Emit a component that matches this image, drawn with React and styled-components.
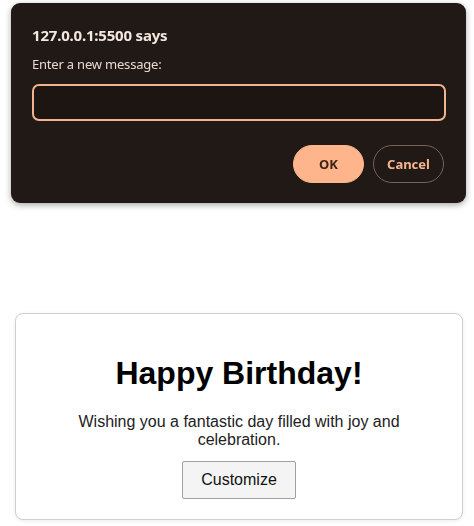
import React, { useState } from "react";
import styled, { createGlobalStyle } from "styled-components";

const GlobalStyle = createGlobalStyle`
  html, body {
    margin: 0;
    padding: 0;
    background: #ffffff;
  }
  body {
    font-family: "Liberation Sans", Arial, sans-serif;
  }
`;

const Page = styled.div`
  padding: 313px 11px 6px 15px;
`;

const Card = styled.div`
  box-sizing: border-box;
  width: 448px;
  padding: 20px;
  border: 1px solid #cfcfcf;
  border-radius: 8px;
  background: #ffffff;
  box-shadow: 0 1px 4px rgba(0, 0, 0, 0.08);
  text-align: center;
`;

const Heading = styled.h1`
  font-size: 32px;
  font-weight: 700;
  margin: 21px 0;
  color: #000;
`;

const Message = styled.p`
  font-size: 16px;
  margin: 0 0 12px;
  color: #222;
`;

const CardButton = styled.button`
  font-family: "Liberation Sans", Arial, sans-serif;
  font-size: 16px;
  padding: 9px 18px;
  border: 1px solid #a0a0a0;
  border-radius: 2px;
  background: #f4f4f4;
  color: #111;
`;

const Overlay = styled.div`
  position: fixed;
  top: 3px;
  left: 11px;
  width: 455px;
  height: 200px;
  box-sizing: border-box;
  padding: 21px 22px 20px 21px;
  background: #211915;
  border-radius: 9px;
  box-shadow: 0 2px 6px rgba(0, 0, 0, 0.35);
  display: flex;
  flex-direction: column;
  font-family: "Noto Sans", "Open Sans", sans-serif;
`;

const Title = styled.div`
  font-size: 15px;
  font-weight: 700;
  color: #f3e7e0;
  line-height: 22px;
  letter-spacing: -0.2px;
`;

const Label = styled.div`
  margin-top: 9px;
  font-size: 13px;
  color: #e8d9d0;
  line-height: 18px;
  letter-spacing: -0.2px;
`;

const Field = styled.input`
  margin-top: 11px;
  box-sizing: border-box;
  width: 414px;
  height: 37px;
  border: 2px solid #f2b48f;
  border-radius: 7px;
  background: #1c1512;
  color: #f3e7e0;
  outline: none;
  padding: 0 10px;
  font-family: inherit;
  font-size: 13px;
`;

const Actions = styled.div`
  margin-top: auto;
  display: flex;
  justify-content: flex-end;
  gap: 9px;
`;

const PillButton = styled.button`
  width: 71px;
  height: 38px;
  border-radius: 19px;
  font-family: "Noto Sans", "Open Sans", sans-serif;
  font-size: 13px;
  font-weight: 700;
  cursor: pointer;
  border: 1px solid ${(p) => (p.primary ? "#ffb58c" : "#7b6054")};
  background: ${(p) => (p.primary ? "#ffb58c" : "transparent")};
  color: ${(p) => (p.primary ? "#3b2418" : "#f7b690")};
`;

const App = () => {
  const [value, setValue] = useState("");

  return (
    <>
      <GlobalStyle />
      <Page>
        <Card>
          <Heading>Happy Birthday!</Heading>
          <Message>Wishing you a fantastic day filled with joy and celebration.</Message>
          <CardButton>Customize</CardButton>
        </Card>
      </Page>
      <Overlay>
        <Title>127.0.0.1:5500 says</Title>
        <Label>Enter a new message:</Label>
        <Field value={value} onChange={(e) => setValue(e.target.value)} />
        <Actions>
          <PillButton primary>OK</PillButton>
          <PillButton>Cancel</PillButton>
        </Actions>
      </Overlay>
    </>
  );
};

export default App;
